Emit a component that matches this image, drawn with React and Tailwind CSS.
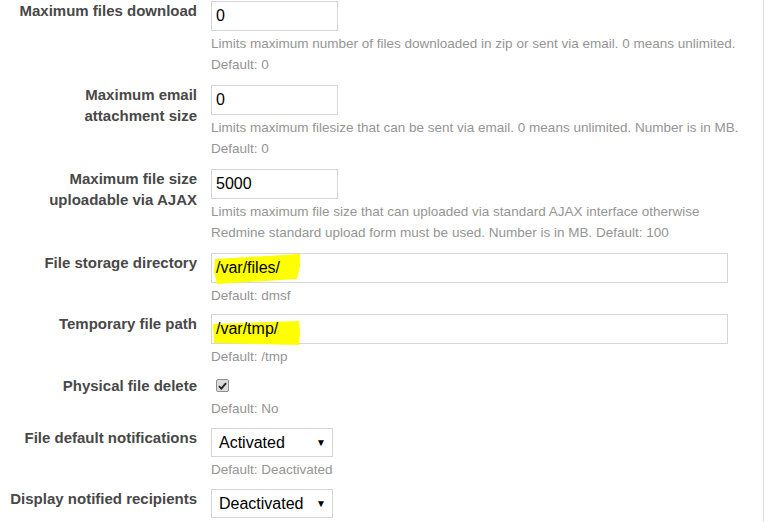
import { useState } from "react";

function Highlight({ points }) {
  return (
    <svg className="absolute left-0 top-0 pointer-events-none" width="120" height="34" viewBox="0 0 120 34">
      <polygon points={points} fill="#ffff00" />
    </svg>
  );
}

function Row({ label, children, className = "mb-[10px]" }) {
  return (
    <div className={`flex ${className}`}>
      <label className="-mt-[1px] w-[197px] shrink-0 text-right font-bold text-[15px] leading-[21px] text-[#484848]">
        {label}
      </label>
      <div className="ml-[14px] flex-1">{children}</div>
    </div>
  );
}

function Help({ children }) {
  return <p className="mt-[2px] text-[13.5px] leading-[21px] text-[#959595]">{children}</p>;
}

function TextInput({ value, wide, marked }) {
  return (
    <div className={`relative h-[30px] border border-[#d5d5d5] bg-white ${wide ? "w-[517px]" : "w-[127px]"}`}>
      {marked && <Highlight points={marked} />}
      <span className="relative block pl-[4px] text-[16px] leading-[28px] text-black">{value}</span>
    </div>
  );
}

function Select({ value }) {
  return (
    <div className="flex h-[29px] w-[122px] items-center justify-between border border-[#d5d5d5] bg-white pl-[7px] pr-[6px] text-[16px] text-black">
      <span>{value}</span>
      <span className="text-[10px]">▼</span>
    </div>
  );
}

export default function App() {
  const [checked, setChecked] = useState(true);

  return (
    <div className="min-h-screen w-[764px] border-r border-[#dcdcdc] bg-white pt-[1px] font-['Liberation_Sans',Arial,sans-serif]">
      <Row label="Maximum files download">
        <TextInput value="0" />
        <Help>
          Limits maximum number of files downloaded in zip or sent via email. 0 means unlimited.
          <br />
          Default: 0
        </Help>
      </Row>

      <Row
        label={
          <>
            Maximum email
            <br />
            attachment size
          </>
        }
      >
        <TextInput value="0" />
        <Help>
          Limits maximum filesize that can be sent via email. 0 means unlimited. Number is in MB.
          <br />
          Default: 0
        </Help>
      </Row>

      <Row
        label={
          <>
            Maximum file size
            <br />
            uploadable via AJAX
          </>
        }
      >
        <TextInput value="5000" />
        <Help>
          Limits maximum file size that can uploaded via standard AJAX interface otherwise
          <br />
          Redmine standard upload form must be used. Number is in MB. Default: 100
        </Help>
      </Row>

      <Row label="File storage directory" className="mb-[8px]">
        <TextInput value="/var/files/" wide marked="3,5 88,0 88,12 85,25 5,30 2,18" />
        <Help>Default: dmsf</Help>
      </Row>

      <Row label="Temporary file path" className="mb-[9px]">
        <TextInput value="/var/tmp/" wide marked="1,9 87,6 88,18 87,30 2,28" />
        <Help>Default: /tmp</Help>
      </Row>

      <Row label="Physical file delete" className="mb-[9px]">
        <div className="h-[20px] pt-[3px] pl-[5px]">
          <button
            type="button"
            onClick={() => setChecked(!checked)}
            className="flex h-[13px] w-[13px] items-center justify-center rounded-[2px] border border-[#8f8f8f] bg-[#dcdcdc]"
          >
            {checked && (
              <svg width="9" height="8" viewBox="0 0 9 8">
                <path d="M1 4.2 L3.4 6.6 L8 1.2" fill="none" stroke="#222" strokeWidth="1.8" />
              </svg>
            )}
          </button>
        </div>
        <Help>Default: No</Help>
      </Row>

      <Row label="File default notifications" className="mb-[9px]">
        <Select value="Activated" />
        <Help>Default: Deactivated</Help>
      </Row>

      <Row label="Display notified recipients" className="mb-0">
        <Select value="Deactivated" />
      </Row>
    </div>
  );
}
